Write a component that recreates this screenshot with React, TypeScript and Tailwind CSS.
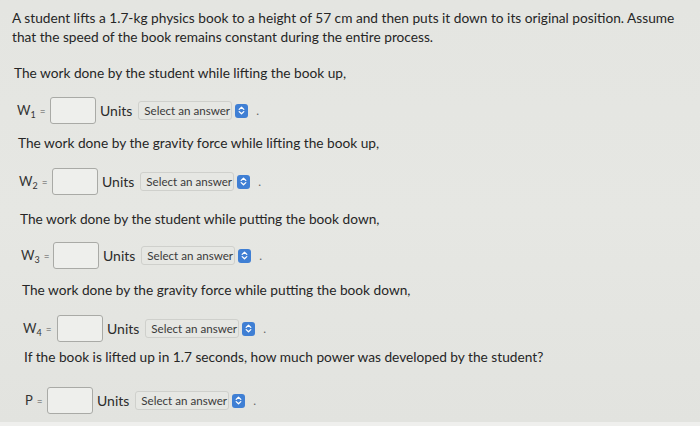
import React from 'react';

const font = { fontFamily: 'Lato, "Open Sans", sans-serif' };

const Chevrons: React.FC = () => (
  <svg width="7" height="9" viewBox="0 0 7 9" fill="none">
    <path d="M1.2 3.4 L3.5 1.2 L5.8 3.4" stroke="white" strokeWidth="1.3" strokeLinecap="round" strokeLinejoin="round" />
    <path d="M1.2 5.6 L3.5 7.8 L5.8 5.6" stroke="white" strokeWidth="1.3" strokeLinecap="round" strokeLinejoin="round" />
  </svg>
);

type RowProps = { name: string; sub?: string; pl: string; labelW: string };

const AnswerRow: React.FC<RowProps> = ({ name, sub, pl, labelW }) => (
  <div className={`flex items-center h-[27px] ${pl}`}>
    <div className={`flex items-baseline text-[13px] text-[#333] ${labelW}`}>
      <span>{name}</span>
      {sub && <span className="text-[9px] relative top-[3px]">{sub}</span>}
      <span className="text-[10px] ml-[4px] text-[#555]">=</span>
    </div>
    <div className="w-[46px] h-[27px] rounded-[3px] border border-[#a9aaa6] bg-[#eeefec]" />
    <span className="ml-[4px] text-[14px] text-[#2b2b2b]">Units</span>
    <div className="ml-[6px] flex items-center h-[19px] w-[94px] overflow-hidden rounded-[3px] border border-[#cfd0cc] bg-[#e6e7e3] pl-[5px]">
      <span className="text-[11.6px] text-[#3a3a3a] whitespace-nowrap">Select an answer</span>
    </div>
    <div className="ml-[3px] flex items-center justify-center w-[13px] h-[14px] rounded-[3px] bg-[#3f7fd4]">
      <Chevrons />
    </div>
    <span className="ml-[8px] text-[12px] text-[#666] leading-none">.</span>
  </div>
);

const Para: React.FC<{ children: React.ReactNode; cls: string }> = ({ children, cls }) => (
  <p className={`h-[19px] leading-[19px] text-[13.7px] text-[#262626] whitespace-nowrap ${cls}`}>{children}</p>
);

export default function App() {
  return (
    <div
      style={font}
      className="w-[700px] h-[426px] overflow-hidden bg-gradient-to-b from-[#e4e5e1] via-[#e6e7e3] to-[#e2e3df] flex flex-col"
    >
      <div className="pt-[8px] pl-[12px] text-[13.7px] leading-[19px] text-[#262626] whitespace-nowrap">
        <p>A student lifts a 1.7-kg physics book to a height of 57 cm and then puts it down to its original position. Assume</p>
        <p>that the speed of the book remains constant during the entire process.</p>
      </div>
      <Para cls="mt-[17px] pl-[14px]">The work done by the student while lifting the book up,</Para>
      <div className="mt-[15px]">
        <AnswerRow name="W" sub="1" pl="pl-[17px]" labelW="w-[33px]" />
      </div>
      <Para cls="mt-[9px] pl-[18px]">The work done by the gravity force while lifting the book up,</Para>
      <div className="mt-[16px]">
        <AnswerRow name="W" sub="2" pl="pl-[19px]" labelW="w-[33px]" />
      </div>
      <Para cls="mt-[14px] pl-[20px]">The work done by the student while putting the book down,</Para>
      <div className="mt-[14px]">
        <AnswerRow name="W" sub="3" pl="pl-[21px]" labelW="w-[32px]" />
      </div>
      <Para cls="mt-[11px] pl-[22px]">The work done by the gravity force while putting the book down,</Para>
      <div className="mt-[16px]">
        <AnswerRow name="W" sub="4" pl="pl-[23px]" labelW="w-[34px]" />
      </div>
      <Para cls="mt-[5px] pl-[24px]">If the book is lifted up in 1.7 seconds, how much power was developed by the student?</Para>
      <div className="mt-[21px]">
        <AnswerRow name="P" pl="pl-[25px]" labelW="w-[22px]" />
      </div>
      <div className="mt-auto h-[4px] bg-[#efefed]" />
    </div>
  );
}
